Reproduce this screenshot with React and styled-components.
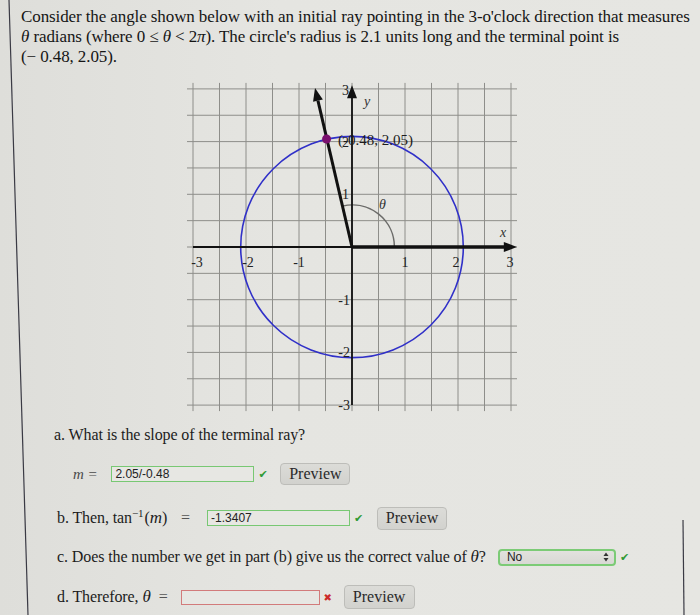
import React from "react";
import styled, { createGlobalStyle } from "styled-components";

const GlobalStyle = createGlobalStyle`
    html, body {
        margin: 0;
        padding: 0;
        background: #e3e3df;
    }
    body {
        font-family: "Liberation Serif", "Times New Roman", serif;
        color: #1c1c1c;
    }
`;

const Page = styled.div`
    position: relative;
    width: 700px;
    height: 615px;
    overflow: hidden;
    box-sizing: border-box;
    padding: 7px 8px 0 21px;
    background: linear-gradient(90deg, #dededa 0%, #e5e5e1 40%, #e6e6e2 100%);
`;

const Frame = styled.svg`
    position: absolute;
    left: 0;
    top: 0;
    pointer-events: none;
`;

const Prompt = styled.div`
    font-size: 17px;
    line-height: 20px;
    letter-spacing: -0.1px;
    white-space: nowrap;
    color: #151515;

    i {
        font-style: italic;
    }
`;

const GraphWrap = styled.div`
    margin: 10px 0 0 165px;
    width: 350px;
    height: 340px;

    svg {
        display: block;
    }
`;

const Row = styled.div`
    display: flex;
    align-items: center;
    height: 24px;
    margin-top: ${(p) => p.$top}px;
    padding-left: ${(p) => p.$indent}px;
    font-size: 16px;
    white-space: nowrap;
    letter-spacing: -0.1px;
`;

const Label = styled.span`
    margin-right: ${(p) => p.$gap ?? 6}px;

    i {
        font-style: italic;
        font-size: 17px;
    }

    sup {
        font-size: 11px;
        vertical-align: 6px;
        line-height: 0;
        margin-right: 1px;
    }
`;

const Eq = styled.span`
    margin: 0 ${(p) => p.$right || 7}px 0 ${(p) => p.$left || 8}px;
    color: #555;
`;

const MathVar = styled.span`
    font-style: italic;
    color: #4a4a4a;
    margin-right: 14px;
    font-size: 15px;
`;

const Field = styled.input`
    box-sizing: border-box;
    width: ${(p) => p.$w}px;
    height: ${(p) => p.$h || 16}px;
    margin: 0;
    padding: 0 3px;
    border: 1.5px solid ${(p) => (p.$bad ? "#d27b7b" : "#78c873")};
    background: #e7e7e3;
    font-family: "Liberation Sans", Arial, sans-serif;
    font-size: 12px;
    color: #222;
    outline: none;
`;

const Mark = styled.span`
    font-family: "DejaVu Sans", sans-serif;
    font-size: ${(p) => (p.$bad ? 10 : 11)}px;
    color: ${(p) => (p.$bad ? "#cc2a2a" : "#2f9a35")};
    margin-left: 4px;
    width: ${(p) => p.$w || 20}px;
`;

const PreviewButton = styled.button`
    box-sizing: border-box;
    width: ${(p) => p.$w || 70}px;
    height: ${(p) => p.$h || 22}px;
    margin-left: ${(p) => p.$gap || 0}px;
    padding: 0;
    border: 1px solid #bdbdb9;
    border-radius: 4px;
    background: linear-gradient(#dcdcd8, #d2d2ce);
    font-family: "Liberation Serif", "Times New Roman", serif;
    font-size: 16px;
    color: #2a2a2a;
`;

const Select = styled.div`
    box-sizing: border-box;
    display: flex;
    align-items: center;
    justify-content: space-between;
    width: 118px;
    height: 17px;
    padding: 0 5px 0 7px;
    border: 2px solid #7ccb76;
    border-radius: 4px;
    background: linear-gradient(#e2e2de, #d8d8d4);
    font-family: "Liberation Sans", Arial, sans-serif;
    font-size: 12px;
    color: #222;
`;

const U = 53;
const V = 52.7;
const OX = 166;
const OY = 170;
const X = (u) => OX + u * U;
const Y = (v) => OY - v * V;

function Graph() {
    const steps = [];
    for (let i = -6; i <= 6; i++) steps.push(i / 2);

    const tip = [129, 11];
    const len = Math.hypot(tip[0] - OX, tip[1] - OY);
    const d = [(tip[0] - OX) / len, (tip[1] - OY) / len];
    const base = [tip[0] - 13 * d[0], tip[1] - 13 * d[1]];
    const perp = [-d[1] * 5, d[0] * 5];

    const ang = Math.atan2(2.05, -0.48);
    const arcEnd = [OX + 42 * Math.cos(ang), OY - 42 * Math.sin(ang)];

    return (
        <svg width="350" height="340" viewBox="0 0 350 340">
            <g stroke="#8e8e8a" strokeWidth="1">
                {steps.map((s) => (
                    <line key={"v" + s} x1={X(s)} x2={X(s)} y1={Y(3) - 6} y2={Y(-3) + 6} />
                ))}
                {steps.map((s) => (
                    <line key={"h" + s} y1={Y(s)} y2={Y(s)} x1={X(-3) - 6} x2={X(3) + 6} />
                ))}
            </g>

            <ellipse cx={OX} cy={OY} rx={2.1 * U} ry={2.1 * V} fill="none" stroke="#3030c8" strokeWidth="1.6" />

            <path
                d={`M ${X(0.8)} ${OY} A 42 42 0 0 0 ${arcEnd[0]} ${arcEnd[1]}`}
                fill="none"
                stroke="#6c6c6a"
                strokeWidth="1.5"
            />

            <line x1={X(-3)} x2={X(3)} y1={OY} y2={OY} stroke="#111" strokeWidth="2" />
            <line x1={OX} x2={X(3.11) - 12} y1={OY} y2={OY} stroke="#111" strokeWidth="3.5" />
            <polygon
                points={`${X(3.11)},${OY} ${X(3.11) - 13},${OY - 5} ${X(3.11) - 13},${OY + 5}`}
                fill="#111"
            />

            <line x1={OX} x2={OX} y1={Y(-3)} y2={Y(3.07) + 12} stroke="#111" strokeWidth="1.8" />
            <polygon
                points={`${OX},${Y(3.07)} ${OX - 5},${Y(3.07) + 13} ${OX + 5},${Y(3.07) + 13}`}
                fill="#111"
            />

            <line x1={OX} y1={OY} x2={base[0]} y2={base[1]} stroke="#111" strokeWidth="3" />
            <polygon
                points={`${tip[0]},${tip[1]} ${base[0] + perp[0]},${base[1] + perp[1]} ${base[0] - perp[0]},${base[1] - perp[1]}`}
                fill="#111"
            />

            <g fontFamily="Liberation Serif, serif" fontSize="14" fill="#222" textAnchor="middle">
                <text x={X(-3) + 4} y="190">-3</text>
                <text x={X(-2) + 2} y="190">-2</text>
                <text x={X(-1)} y="190">-1</text>
                <text x={X(1)} y="190">1</text>
                <text x={X(2) - 2} y="190">2</text>
                <text x={X(3) - 1} y="190">3</text>
            </g>
            <g fontFamily="Liberation Serif, serif" fontSize="14" fill="#222" textAnchor="end">
                <text x={OX - 3} y={Y(3) + 6}>3</text>
                <text x={OX - 3} y={Y(2) + 5}>2</text>
                <text x={OX - 3} y={Y(1) + 5}>1</text>
                <text x={OX - 2} y={Y(-1) + 5}>-1</text>
                <text x={OX - 2} y={Y(-2) + 5}>-2</text>
                <text x={OX - 2} y={Y(-3) + 5}>-3</text>
            </g>

            <circle cx={X(-0.48)} cy={Y(2.05)} r="4.5" fill="#7a0f6e" />
            <text x="152" y="68" fontFamily="Liberation Serif, serif" fontSize="15" fill="#1c1c1c">
                (-0.48, 2.05)
            </text>

            <g fontFamily="Liberation Serif, serif" fontStyle="italic" fill="#333" fontSize="14">
                <text x="178" y="29">y</text>
                <text x="314" y="160">x</text>
                <text x="193" y="132">θ</text>
            </g>
        </svg>
    );
}

function Arrows() {
    return (
        <svg width="6" height="10" viewBox="0 0 6 10">
            <polygon points="3,0.5 5.5,4 0.5,4" fill="#333" />
            <polygon points="3,9.5 5.5,6 0.5,6" fill="#333" />
        </svg>
    );
}

export default function App() {
    return (
        <>
            <GlobalStyle />
            <Page>
                <Frame width="700" height="615">
                    <line x1="9" y1="0" x2="28" y2="615" stroke="#3a3a44" strokeWidth="1.2" />
                    <line x1="683" y1="520" x2="684" y2="615" stroke="#3a3a44" strokeWidth="1.2" />
                </Frame>

                <Prompt>
                    Consider the angle shown below with an initial ray pointing in the 3-o'clock direction that measures
                    <br />
                    <i>θ</i> radians (where 0 ≤ <i>θ</i> &lt; 2<i>π</i>). The circle's radius is 2.1 units long and the
                    terminal point is
                    <br />
                    (− 0.48, 2.05).
                </Prompt>

                <GraphWrap>
                    <Graph />
                </GraphWrap>

                <Row $top={6} $indent={33}>
                    <Label>a. What is the slope of the terminal ray?</Label>
                </Row>

                <Row $top={15} $indent={52}>
                    <MathVar>m =</MathVar>
                    <Field $w={143} readOnly value="2.05/-0.48" />
                    <Mark>✔</Mark>
                    <PreviewButton $gap={2}>Preview</PreviewButton>
                </Row>

                <Row $top={20} $indent={36}>
                    <Label $gap={0}>
                        b. Then, tan<sup>−1</sup>(<i>m</i>)
                    </Label>
                    <Eq $left={14} $right={17}>
                        =
                    </Eq>
                    <Field $w={143} readOnly value="-1.3407" />
                    <Mark>✔</Mark>
                    <PreviewButton $gap={3} $h={23}>
                        Preview
                    </PreviewButton>
                </Row>

                <Row $top={15} $indent={36}>
                    <Label $gap={12}>
                        c. Does the number we get in part (b) give us the correct value of <i>θ</i>?
                    </Label>
                    <Select>
                        <span>No</span>
                        <Arrows />
                    </Select>
                    <Mark>✔</Mark>
                </Row>

                <Row $top={16} $indent={36}>
                    <Label $gap={0}>
                        d. Therefore, <i>θ</i>
                    </Label>
                    <Eq $left={8} $right={13}>
                        =
                    </Eq>
                    <Field $w={139} $h={15} $bad readOnly value="" />
                    <Mark $bad>✖</Mark>
                    <PreviewButton $gap={0} $w={71} $h={24}>
                        Preview
                    </PreviewButton>
                </Row>
            </Page>
        </>
    );
}
